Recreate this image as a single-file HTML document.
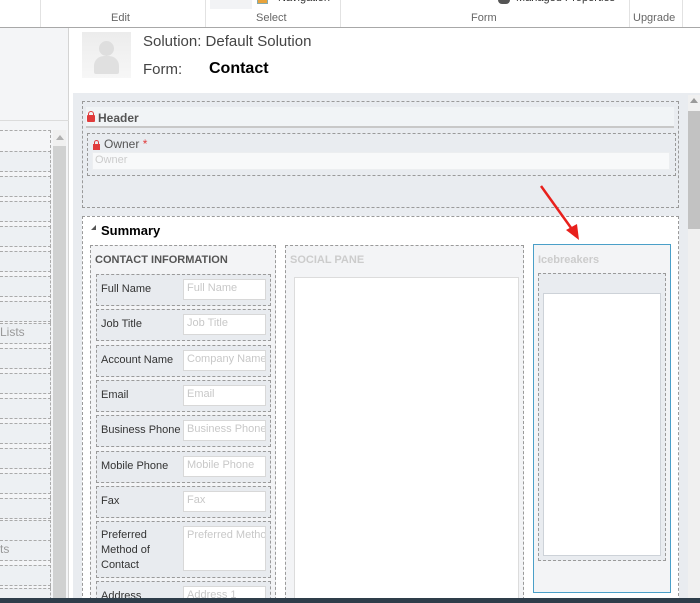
<!DOCTYPE html>
<html style="overflow:hidden;width:700px;height:603px"><head><style>
*{margin:0;padding:0;box-sizing:border-box}
body{width:700px;height:603px;overflow:hidden;position:relative;background:#fff;font-family:"Segoe UI","Liberation Sans",sans-serif;}
.a{position:absolute}
.d{border:1px dashed #9a9a9a}
.inp{position:absolute;left:86px;width:83px;height:21px;background:#fff;border:1px solid #d8d8d8;font-size:11px;color:#c8c8c8;padding:2px 3px;white-space:nowrap;overflow:hidden}
.row{position:absolute;left:96px;width:175px;background:#e8ebef}
.row .l{position:absolute;left:4px;font-size:11px;color:#333}
.nav{position:absolute;left:0;width:51px;height:21px;border:1px dashed #aaa;border-left:none;background:#edf0f3}
</style></head><body>
<div class="a" style="left:0;top:0;width:700px;height:28px;background:#fff;border-bottom:1px solid #a8a8a8"></div>
<div class="a" style="left:40px;top:0;width:1px;height:27px;background:#e2e2e2"></div>
<div class="a" style="left:205px;top:0;width:1px;height:27px;background:#e2e2e2"></div>
<div class="a" style="left:340px;top:0;width:1px;height:27px;background:#e2e2e2"></div>
<div class="a" style="left:629px;top:0;width:1px;height:27px;background:#e2e2e2"></div>
<div class="a" style="left:682px;top:0;width:1px;height:27px;background:#e2e2e2"></div>
<div class="a" style="left:210px;top:0;width:42px;height:9px;background:#f2f3f5"></div>
<div class="a" style="left:257px;top:-6px;width:11px;height:10px;background:#e8a33c;border:1px solid #8aa"></div>
<div class="a" style="left:278px;top:-8px;font-size:11px;color:#333">Navigation</div>
<div class="a" style="left:498px;top:-4px;width:12px;height:8px;border-radius:6px;background:#555"></div>
<div class="a" style="left:516px;top:-8px;font-size:11px;color:#333">Managed Properties</div>
<div class="a" style="left:62px;top:-6px;width:1px;height:6px;background:#888"></div>
<div class="a" style="left:414px;top:-6px;width:1px;height:6px;background:#c33"></div>
<div class="a" style="left:111px;top:12px;font-size:11px;color:#666">Edit</div>
<div class="a" style="left:256px;top:12px;font-size:11px;color:#666">Select</div>
<div class="a" style="left:471px;top:12px;font-size:11px;color:#666">Form</div>
<div class="a" style="left:633px;top:12px;font-size:11px;color:#666">Upgrade</div>
<div class="a" style="left:0;top:28px;width:69px;height:575px;background:#f4f5f7;border-right:1px solid #d4d4d4"></div>
<div class="a" style="left:0;top:120px;width:69px;height:1px;background:#dcdcdc"></div>
<div class="a" style="left:0;top:130px;width:51px;height:473px;border:1px dashed #aaa;border-left:none;background:#f4f5f7"></div>
<div class="a" style="left:53px;top:130px;width:13px;height:473px;background:#f0f0f0"></div>
<div class="a" style="left:53px;top:146px;width:13px;height:457px;background:#d0d1d1"></div>
<div class="a" style="left:56px;top:135px;width:0;height:0;border-left:4px solid transparent;border-right:4px solid transparent;border-bottom:5px solid #b0b0b0"></div>
<div class="nav" style="top:151px"></div><div class="nav" style="top:176px"></div><div class="nav" style="top:201px"></div><div class="nav" style="top:226px"></div><div class="nav" style="top:251px"></div><div class="nav" style="top:276px"></div><div class="nav" style="top:301px"></div><div class="nav" style="top:323px"></div><div class="nav" style="top:348px"></div><div class="nav" style="top:373px"></div><div class="nav" style="top:398px"></div><div class="nav" style="top:423px"></div><div class="nav" style="top:448px"></div><div class="nav" style="top:473px"></div><div class="nav" style="top:498px"></div><div class="nav" style="top:520px"></div><div class="nav" style="top:540px"></div><div class="nav" style="top:565px"></div><div class="nav" style="top:588px"></div>
<div class="a" style="left:0;top:325px;font-size:12px;color:#999">Lists</div>
<div class="a" style="left:0;top:542px;font-size:12px;color:#999">ts</div>
<div class="a" style="left:82px;top:32px;width:49px;height:46px;background:linear-gradient(#ececec,#f7f7f7)"></div>
<div class="a" style="left:99px;top:41px;width:15px;height:15px;border-radius:50%;background:#dedede"></div>
<div class="a" style="left:94px;top:56px;width:25px;height:18px;border-radius:10px 10px 2px 2px;background:#e0e0e0"></div>
<div class="a" style="left:143px;top:33px;font-size:15px;color:#444">Solution: Default Solution</div>
<div class="a" style="left:143px;top:61px;font-size:15px;color:#444">Form:</div>
<div class="a" style="left:209px;top:60px;font-size:16px;color:#000;font-weight:bold">Contact</div>
<div class="a" style="left:73px;top:93px;width:627px;height:510px;background:#e9ecf0"></div>
<div class="a" style="left:688px;top:95px;width:12px;height:508px;background:#f0f0f0"></div>
<div class="a" style="left:688px;top:111px;width:12px;height:118px;background:#c2c2c2"></div>
<div class="a" style="left:690px;top:98px;width:0;height:0;border-left:4px solid transparent;border-right:4px solid transparent;border-bottom:5px solid #999"></div>
<div class="a d" style="left:82px;top:101px;width:597px;height:107px;background:#e9ecf0"></div>
<div class="a" style="left:86px;top:107px;width:588px;height:21px;background:#f1f4f6;border-bottom:2px solid #c8c8c8"></div>
<div class="a" style="left:87px;top:115px;width:8px;height:7px;background:#e03b3b;border-radius:1px"></div>
<div class="a" style="left:88px;top:111px;width:6px;height:6px;border:1.5px solid #e03b3b;border-bottom:none;border-radius:3px 3px 0 0"></div>
<div class="a" style="left:98px;top:111px;font-size:12px;color:#555;font-weight:bold">Header</div>
<div class="a d" style="left:87px;top:133px;width:589px;height:43px;background:#e9ecf0"></div>
<div class="a" style="left:93px;top:144px;width:7px;height:6px;background:#e03b3b"></div>
<div class="a" style="left:94px;top:140px;width:5px;height:5px;border:1.5px solid #e03b3b;border-bottom:none;border-radius:3px 3px 0 0"></div>
<div class="a" style="left:104px;top:137px;font-size:12px;color:#555">Owner <span style="color:#e03b3b">*</span></div>
<div class="a" style="left:92px;top:152px;width:578px;height:18px;background:#f8f9fa;border:1px solid #eceef0;font-size:11px;color:#ccc;padding:1px 2px">Owner</div>
<div class="a d" style="left:82px;top:216px;width:597px;height:390px;background:#fff"></div>
<div class="a" style="left:91px;top:225px;width:0;height:0;border-left:5px solid transparent;border-bottom:5px solid #555"></div>
<div class="a" style="left:101px;top:223px;font-size:13px;font-weight:bold;color:#000">Summary</div>
<div class="a d" style="left:90px;top:245px;width:186px;height:360px;background:#f3f4f6"></div>
<div class="a" style="left:95px;top:254px;font-size:11px;font-weight:bold;color:#555">CONTACT INFORMATION</div>
<div class="row d" style="top:274px;height:32px"><span class="l" style="top:8px">Full Name</span><div class="inp" style="top:4px">Full Name</div></div>
<div class="row d" style="top:309px;height:32px"><span class="l" style="top:8px">Job Title</span><div class="inp" style="top:4px">Job Title</div></div>
<div class="row d" style="top:345px;height:32px"><span class="l" style="top:8px">Account Name</span><div class="inp" style="top:4px">Company Name</div></div>
<div class="row d" style="top:380px;height:32px"><span class="l" style="top:8px">Email</span><div class="inp" style="top:4px">Email</div></div>
<div class="row d" style="top:415px;height:32px"><span class="l" style="top:8px">Business Phone</span><div class="inp" style="top:4px">Business Phone</div></div>
<div class="row d" style="top:451px;height:32px"><span class="l" style="top:8px">Mobile Phone</span><div class="inp" style="top:4px">Mobile Phone</div></div>
<div class="row d" style="top:486px;height:32px"><span class="l" style="top:8px">Fax</span><div class="inp" style="top:4px">Fax</div></div>
<div class="row d" style="top:521px;height:57px"><span class="l" style="top:6px;line-height:15px">Preferred<br>Method of<br>Contact</span><div class="inp" style="top:4px;height:45px">Preferred Method</div></div>
<div class="row d" style="top:581px;height:30px"><span class="l" style="top:8px">Address</span><div class="inp" style="top:4px">Address 1</div></div>
<div class="a d" style="left:285px;top:245px;width:239px;height:360px;background:#f3f4f6"></div>
<div class="a" style="left:290px;top:254px;font-size:11px;font-weight:bold;color:#ccc">SOCIAL PANE</div>
<div class="a" style="left:294px;top:277px;width:225px;height:330px;background:#fff;border:1px solid #dcdcdc"></div>
<div class="a" style="left:533px;top:244px;width:138px;height:349px;border:1px solid #4a9fc8;background:#f3f4f6"></div>
<div class="a" style="left:538px;top:254px;font-size:11px;font-weight:bold;color:#ccc">Icebreakers</div>
<div class="a d" style="left:538px;top:273px;width:128px;height:288px;background:#e9ecf0"></div>
<div class="a" style="left:543px;top:293px;width:118px;height:263px;background:#fff;border:1px solid #cdd2d8"></div>
<svg class="a" style="left:530px;top:180px" width="60" height="70"><line x1="11" y1="6" x2="44" y2="52" stroke="#e8201c" stroke-width="2.5"/><polygon points="49,60 36,50 47,44" fill="#e8201c"/></svg>
<div class="a" style="left:0;top:598px;width:700px;height:5px;background:#2e3d4a"></div>
</body></html>
